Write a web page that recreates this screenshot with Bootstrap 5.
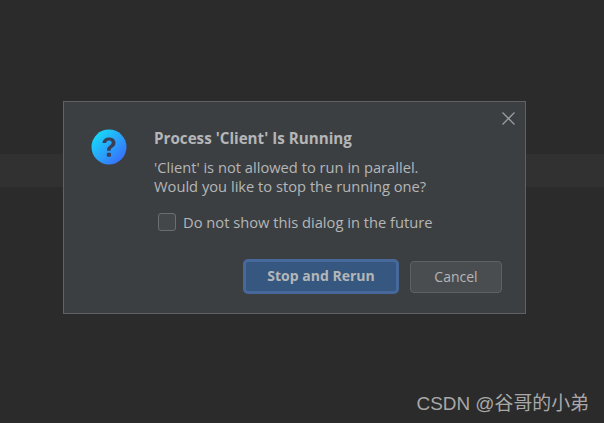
<!DOCTYPE html>
<html lang="en">

<head>
    <meta charset="UTF-8">
    <meta name="viewport" content="width=device-width, initial-scale=1.0">
    <title>Process Running</title>
    <link href="https://cdn.jsdelivr.net/npm/bootstrap@5.3.2/dist/css/bootstrap.min.css" rel="stylesheet">
    <style>
        html, body { height: 100%; }
        body {
            overflow: hidden;
            font-family: "Open Sans", "Noto Sans", sans-serif;
            font-size: 14.7px;
            color: #b4b6b8;
            background: linear-gradient(#2b2b2b 154px, #313131 154px, #313131 187px, #2b2b2b 187px);
            padding: 101px 0 0 63px;
        }
        .run-dialog {
            width: 463px;
            height: 213px;
            background: #3c3f41;
            border: 1px solid #5f6162;
            padding: 26px 23px 0 27px;
        }
        .run-close { position: absolute; top: 9px; right: 9px; display: block; }
        .run-icon { width: 36px; height: 36px; margin-top: 1px; margin-right: 27px; }
        .run-title { font-weight: 700; font-size: 15.2px; line-height: 20px; margin-bottom: 10px; }
        .run-text { line-height: 19px; }
        .run-check { margin-top: 16px; line-height: 20px; }
        .run-box { width: 18px; height: 18px; border: 1px solid #6b6e70; border-radius: 3px; background: #43474a; margin-left: 4px; margin-right: 7px; }
        .run-actions { margin-top: 27px; }
        .run-btn { font-size: 14px; padding: 0; border-radius: 4px; color: #b4b6b8; }
        .run-primary { width: 156px; height: 35px; padding-bottom: 2px; font-weight: 700; background: #365880; border: 3px solid #46689a; border-radius: 5px; margin-right: 11px; }
        .run-primary:hover { background: #365880; border-color: #46689a; color: #b4b6b8; }
        .run-cancel { width: 92px; height: 32px; padding-bottom: 1px; background: #4a4d4f; border: 1px solid #5f6163; }
        .run-mark {
            position: absolute;
            right: 15px;
            bottom: 8px;
            font-family: "Liberation Sans", "Noto Sans CJK SC", sans-serif;
            font-size: 18.9px;
            line-height: 22px;
            color: #a8a8a8;
        }
    </style>
</head>

<body>
    <div class="run-dialog position-relative">
        <svg class="run-close" width="15" height="15" viewBox="0 0 15 15" aria-label="Close">
            <path d="M1.5 1.5l12 12M13.5 1.5l-12 12" stroke="#9a9c9e" stroke-width="1.3" fill="none" />
        </svg>
        <div class="d-flex">
            <svg class="run-icon flex-shrink-0" viewBox="0 0 36 36">
                <defs>
                    <linearGradient id="qfill" x1="0.1" y1="0.1" x2="0.9" y2="0.9">
                        <stop offset="0" stop-color="#16dcf8" />
                        <stop offset="1" stop-color="#3a6cfc" />
                    </linearGradient>
                </defs>
                <circle cx="18" cy="18" r="17.5" fill="url(#qfill)" />
                <path d="M11.5 14c.3-3.6 3-5.6 6.600-5.600 3.800 0 6.400 2.200 6.400 5.300 0 2.500-1.400 3.700-3 4.800-1.400 1-1.900 1.600-1.900 3.200h-3.600c-.1-2.600.8-3.800 2.500-5 1.400-1 2.200-1.700 2.200-2.900 0-1.300-1.100-2.200-2.600-2.200-1.700 0-2.800 1-3 2.500z" fill="#3b3f55" />
                <rect x="15.800" y="23.800" width="4.200" height="4" rx="1.200" fill="#3b3f55" />
            </svg>
            <div class="flex-grow-1">
                <div class="run-title">Process 'Client' Is Running</div>
                <div class="run-text">'Client' is not allowed to run in parallel.<br>Would you like to stop the running one?</div>
                <div class="run-check d-flex align-items-center">
                    <span class="run-box d-block"></span>
                    <span>Do not show this dialog in the future</span>
                </div>
                <div class="run-actions d-flex align-items-center justify-content-end">
                    <button type="button" class="btn run-btn run-primary">Stop and Rerun</button>
                    <button type="button" class="btn run-btn run-cancel">Cancel</button>
                </div>
            </div>
        </div>
    </div>
    <div class="run-mark">CSDN @谷哥的小弟</div>

    <script src="https://cdn.jsdelivr.net/npm/bootstrap@5.3.2/dist/js/bootstrap.bundle.min.js"></script>
</body>

</html>
